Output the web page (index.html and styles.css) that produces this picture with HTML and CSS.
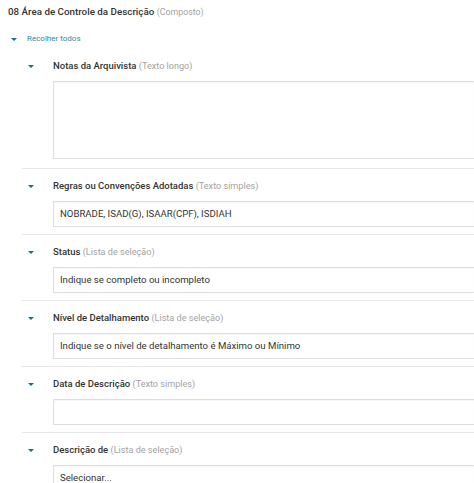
FILE: index.html
```html
<!DOCTYPE html>
<html lang="pt">
<head>
<meta charset="utf-8">
<link rel="stylesheet" href="styles.css">
</head>
<body>
<div class="page">
  <h1 class="title">08 Área de Controle da Descrição <span class="type">(Composto)</span></h1>
  <div class="collapse-all"><span class="caret"></span>Recolher todos</div>
  <div class="items">
    <div class="item">
      <span class="caret"></span>
      <div class="body">
        <div class="label">Notas da Arquivista <span class="type">(Texto longo)</span></div>
        <div class="field textarea"></div>
      </div>
    </div>
    <div class="item">
      <span class="caret"></span>
      <div class="body">
        <div class="label">Regras ou Convenções Adotadas <span class="type">(Texto simples)</span></div>
        <div class="field">NOBRADE, ISAD(G), ISAAR(CPF), ISDIAH</div>
      </div>
    </div>
    <div class="item">
      <span class="caret"></span>
      <div class="body">
        <div class="label">Status <span class="type">(Lista de seleção)</span></div>
        <div class="field">Indique se completo ou incompleto</div>
      </div>
    </div>
    <div class="item">
      <span class="caret"></span>
      <div class="body">
        <div class="label">Nível de Detalhamento <span class="type">(Lista de seleção)</span></div>
        <div class="field">Indique se o nível de detalhamento é Máximo ou Mínimo</div>
      </div>
    </div>
    <div class="item">
      <span class="caret"></span>
      <div class="body">
        <div class="label">Data de Descrição <span class="type">(Texto simples)</span></div>
        <div class="field"></div>
      </div>
    </div>
    <div class="item">
      <span class="caret"></span>
      <div class="body">
        <div class="label">Descrição de <span class="type">(Lista de seleção)</span></div>
        <div class="field">Selecionar...</div>
      </div>
    </div>
  </div>
</div>
</body>
</html>
```
FILE: styles.css
```css
html, body {
  margin: 0;
  padding: 0;
  background: #fff;
  overflow: hidden;
}
body {
  font-family: Roboto, "Liberation Sans", Arial, sans-serif;
  font-size: 9.6px;
  color: #333;
}
.page {
  padding: 4px 0 0 8px;
}
.title {
  margin: 0;
  font-size: 9.8px;
  font-weight: 500;
  line-height: 16px;
  color: #333;
}
.type {
  font-weight: 400;
  font-size: 8.8px;
  color: #a3a3a3;
}
.label .type {
  font-size: 9.1px;
}
.collapse-all {
  margin-top: 11px;
  line-height: 16px;
  color: #2f8a9b;
  font-size: 8px;
  display: flex;
  align-items: center;
}
.caret {
  display: inline-block;
  width: 0;
  height: 0;
  border-left: 3px solid transparent;
  border-right: 3px solid transparent;
  border-top: 3px solid #17707f;
}
.collapse-all .caret {
  margin: 0 10px 0 3px;
}
.items {
  margin-top: 11px;
  margin-left: 14px;
}
.item {
  display: flex;
  border-bottom: 1px solid #e6e6e6;
  padding: 0 0 7px 0;
}
.item + .item {
  padding-top: 9px;
}
.item > .caret {
  margin: 7px 19px 0 6px;
  flex: none;
}
.body {
  flex: 1;
  min-width: 0;
}
.label {
  line-height: 16px;
  font-size: 9.5px;
  font-weight: 500;
  color: #333;
}
.field {
  margin-top: 7px;
  height: 24px;
  border: 1px solid #dedede;
  border-right: none;
  box-shadow: inset 0 1px 1px rgba(0,0,0,0.04);
  line-height: 24px;
  padding-left: 6px;
  color: #333;
  white-space: nowrap;
  overflow: hidden;
}
.field.textarea {
  height: 76px;
  margin-bottom: 2px;
}
```
